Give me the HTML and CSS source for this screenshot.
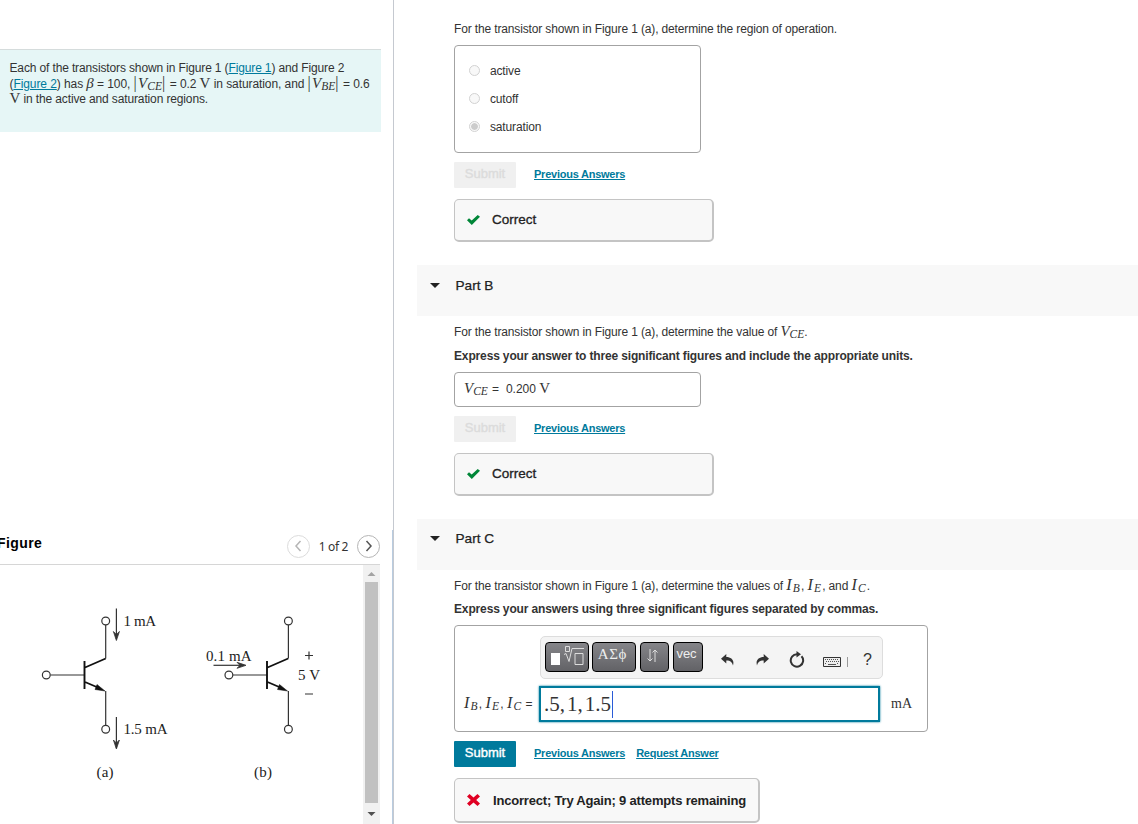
FILE: index.html
```
<!DOCTYPE html>
<html lang="en">
<head>
    <meta charset="UTF-8">
    <meta name="viewport" content="width=device-width, initial-scale=1.0">
    <title>Transistor Regions</title>
    <link rel="stylesheet" href="styles.css">
</head>
<body>
    <div class="page">
        <aside class="sidebar">
            <div class="intro">
                <div class="line intro-1">Each of the transistors shown in Figure 1 (<a href="#">Figure 1</a>) and Figure 2</div>
                <div class="line intro-2">(<a href="#">Figure 2</a>) has <i class="math">β</i> = 100, <span class="bar">|</span><i class="math">V<sub>CE</sub></i><span class="bar">|</span> = 0.2 <span class="math">V</span> in saturation, and <span class="bar">|</span><i class="math">V<sub>BE</sub></i><span class="bar">|</span> = 0.6</div>
                <div class="line intro-3"><span class="math">V</span> in the active and saturation regions.</div>
            </div>

            <div class="figure-panel">
                <div class="figure-header">
                    <h3>Figure</h3>
                    <div class="pager">
                        <button class="page-btn prev" disabled><svg width="8" height="12" viewBox="0 0 8 12"><path d="M6.500 1 2 6l4.500 5"/></svg></button>
                        <span>1 of 2</span>
                        <button class="page-btn next"><svg width="8" height="12" viewBox="0 0 8 12"><path d="M1.500 1 6 6l-4.500 5"/></svg></button>
                    </div>
                </div>
                <div class="figure-body">
                    <svg class="circuit" width="363" height="259" viewBox="0 565 363 259">
                        <!-- transistor (a) -->
                        <g class="wire">
                            <circle cx="46.300" cy="675" r="3.900"/>
                            <path d="M50.500 675H84M105.700 625v33.500M105.700 691v34"/>
                            <circle cx="105.700" cy="621" r="3.900"/>
                            <circle cx="105.700" cy="729.300" r="3.900"/>
                            <path d="M116.400 608.500V639M116.400 717v31"/>
                            <path d="M113.400 631.500l3 9 3-9-3 3zM113.400 740l3 9 3-9-3 3z" fill="#333" stroke-width="0.800"/>
                            <path class="thick" d="M84.500 661v28M85 667.500l20.700-9M85 682l14 6"/>
                            <path class="tip" d="M97 684.500l8 6.500-10-1.500z"/>
                        </g>
                        <!-- transistor (b) -->
                        <g class="wire">
                            <circle cx="228.900" cy="675" r="3.900"/>
                            <path d="M233 675h34M288.400 625v33.500M288.400 691v34"/>
                            <circle cx="288.400" cy="621" r="3.900"/>
                            <circle cx="288.400" cy="729.300" r="3.900"/>
                            <path d="M213.500 665.300H244"/>
                            <path d="M237 662.300l9 3-9 3 3-3z" fill="#333" stroke-width="0.800"/>
                            <path class="thick" d="M267 661v28M267.500 667.500l20.700-9M267.500 682l14 6"/>
                            <path class="tip" d="M279.500 684.500l8 6.500-10-1.500z"/>
                            <path d="M305 655.500h8M309 651.500v8M305 694h8"/>
                        </g>
                        <text x="123.500" y="625.500" textLength="32.500">1 mA</text>
                        <text x="123.500" y="734" textLength="44">1.5 mA</text>
                        <text x="206" y="661" textLength="45.500">0.1 mA</text>
                        <text x="298" y="680" textLength="22">5 V</text>
                        <text x="96.500" y="777" textLength="17">(a)</text>
                        <text x="254" y="777" textLength="18">(b)</text>
                    </svg>
                    <div class="scrollbar">
                        <svg width="17" height="17" viewBox="0 0 17 17"><path d="M4.500 11 8.500 7l4 4z" fill="#a3a3a3"/></svg>
                        <div class="thumb"></div>
                        <svg width="17" height="21" viewBox="0 0 17 21"><path d="M4.500 9h8l-4 4z" fill="#505050"/></svg>
                    </div>
                </div>
            </div>
        </aside>

        <main class="content">
            <section class="part part-a">
                <p class="question">For the transistor shown in Figure 1 (a), determine the region of operation.</p>
                <div class="box choices">
                    <label><span class="radio"></span><span>active</span></label>
                    <label><span class="radio"></span><span>cutoff</span></label>
                    <label><span class="radio checked"></span><span>saturation</span></label>
                </div>
                <div class="actions">
                    <button class="submit" disabled>Submit</button>
                    <a href="#">Previous Answers</a>
                </div>
                <div class="feedback">
                    <svg class="check" width="13" height="10" viewBox="0 0 13 10"><path d="M0 5.200 2 3.300l2.700 2.300L10.700 0 13 1.800 4.800 10z"/></svg>
                    Correct
                </div>
            </section>

            <header class="part-header">
                <span class="arrow"></span>
                <h2>Part B</h2>
            </header>
            <section class="part">
                <p class="question">For the transistor shown in Figure 1 (a), determine the value of <i class="math">V<sub>CE</sub></i>.</p>
                <p class="instruction">Express your answer to three significant figures and include the appropriate units.</p>
                <div class="box result">
                    <i class="math">V<sub>CE</sub></i><span class="equals">=</span><span>0.200 <span class="math">V</span></span>
                </div>
                <div class="actions">
                    <button class="submit" disabled>Submit</button>
                    <a href="#">Previous Answers</a>
                </div>
                <div class="feedback">
                    <svg class="check" width="13" height="10" viewBox="0 0 13 10"><path d="M0 5.200 2 3.300l2.700 2.300L10.700 0 13 1.800 4.800 10z"/></svg>
                    Correct
                </div>
            </section>

            <header class="part-header part-c-header">
                <span class="arrow"></span>
                <h2>Part C</h2>
            </header>
            <section class="part">
                <p class="question">For the transistor shown in Figure 1 (a), determine the values of <i class="math current">I<sub>B</sub></i>, <i class="math current">I<sub>E</sub></i>, and <i class="math current">I<sub>C</sub></i>.</p>
                <p class="instruction part-c-text">Express your answers using three significant figures separated by commas.</p>
                <div class="box editor">
                    <div class="toolbar">
                        <button class="tool root">
                            <svg width="34" height="20" viewBox="0 0 34 20"><path d="M1 8h9v12H1z" fill="#fff"/><path d="M14 9.500l2-1 3 8L22 3.500H34M15.500 1.500h4v5h-4zM25 8.500h8v11h-8z" fill="none" stroke="#ddd"/></svg>
                        </button>
                        <button class="tool greek">ΑΣϕ</button>
                        <button class="tool arrows"><svg width="11" height="13" viewBox="0 0 11 13"><path d="M3 0v12M.5 9.500 3 12l2.500-2.500M8 13V1M5.500 3.500 8 1l2.500 2.500" fill="none" stroke="#ddd"/></svg></button>
                        <button class="tool vec">vec</button>
                        <div class="icons">
                            <svg width="13" height="12" viewBox="0 0 13 12"><path d="M0 4.800 5.300 0v2.900c5 .1 8.300 3 6.700 8.600-1-3.500-2.700-5.100-6.700-5v3z"/></svg>
                            <svg width="13" height="12" viewBox="0 0 13 12"><path d="M13 4.800 7.700 0v2.900c-5 .1-8.300 3-6.700 8.600 1-3.500 2.700-5.100 6.700-5v3z"/></svg>
                            <svg class="reset" width="16" height="17" viewBox="0 0 16 17"><path d="M8 3.300a6.200 6.200 0 1 0 4.500 2" fill="none" stroke="#333" stroke-width="2"/><path d="M7.500 0v6.500L12 3.300z"/></svg>
                            <svg class="keyboard" width="18" height="10" viewBox="0 0 18 10"><path d="M.5.500h17v9H.5z" fill="#eee" stroke="#333"/><path d="M2 2.500h14M3 4.500h13M2 6.500h2M14 6.500h2" stroke="#555" stroke-dasharray="1 1"/><path d="M5 7.500h8" stroke="#555"/></svg>
                            <span class="divider"></span>
                            <span class="help">?</span>
                        </div>
                    </div>
                    <div class="answer-row">
                        <span class="answer-label"><i class="math current">I<sub>B</sub></i>, <i class="math current">I<sub>E</sub></i>, <i class="math current">I<sub>C</sub></i> =</span>
                        <div class="answer-input"><span>.5,</span><span>1,</span><span>1.5</span><i class="caret"></i></div>
                        <span class="unit">mA</span>
                    </div>
                </div>
                <div class="actions">
                    <button class="submit">Submit</button>
                    <a href="#">Previous Answers</a>
                    <a href="#" class="request">Request Answer</a>
                </div>
                <div class="feedback wrong">
                    <svg class="cross" width="13" height="12" viewBox="0 0 13 12"><path d="M0 2.500 2.500 0l4 3.500 4-3.500L13 2.500 9.200 6l3.800 3.500-2.500 2.500-4-3.500-4 3.500L0 9.500 3.800 6z"/></svg>
                    Incorrect; Try Again; 9 attempts remaining
                </div>
            </section>
        </main>
    </div>
</body>
</html>
```
FILE: styles.css
```
* {
    box-sizing: border-box;
}

body {
    margin: 0;
    font-family: "Liberation Sans", Arial, sans-serif;
    font-size: 12px;
    color: #333;
    background-color: #fff;
    overflow: hidden;
}

h2, h3, p {
    margin: 0;
}

a {
    color: #007a9c;
    text-underline-offset: 1px;
}

button {
    font-family: inherit;
    border: none;
    padding: 0;
}

.page {
    display: flex;
    height: 824px;
}

/* Math symbols */
.math {
    font-family: "Liberation Serif", "Times New Roman", serif;
    font-size: 15px;
    line-height: 0;
    letter-spacing: 0;
}

.math sub {
    font-size: 11.5px;
    line-height: 0;
    vertical-align: -2px;
}

.current {
    font-size: 16px;
    letter-spacing: 1.2px;
}

.bar {
    margin-right: 1.3px;
    font-family: "Liberation Serif", serif;
    font-size: 16px;
    line-height: 0;
    letter-spacing: 0;
}

/* Left column */
.sidebar {
    width: 394px;
    flex: none;
    display: flex;
    flex-direction: column;
    justify-content: space-between;
    border-right: 1px solid #c5c9d0;
}

.intro {
    width: 381px;
    height: 83px;
    margin-top: 49px;
    padding: 10px 0 0 9.500px;
    letter-spacing: -0.135px;
    background-color: #e6f6f6;
    border-top: 1px solid #d5dcdc;
    white-space: nowrap;
}

.line {
    height: 16px;
    line-height: 16px;
}

.intro-2 {
    letter-spacing: -0.08px;
}

.intro-3 {
    height: 15px;
    line-height: 15px;
}

.figure-panel {
    height: 294px;
    border-right: 1px solid #b9cce0;
}

.figure-header {
    width: 380px;
    height: 35px;
    display: flex;
    justify-content: space-between;
    border-bottom: 1px solid #d6d6d6;
}

.figure-header h3 {
    margin: 5px 0 0 -3px;
    font-size: 14px;
    line-height: 17px;
    letter-spacing: 0.4px;
    color: #000;
}

.pager {
    display: flex;
    align-items: center;
    gap: 9px;
    height: 32px;
    font-family: "Noto Sans", sans-serif;
    font-size: 12px;
    letter-spacing: -0.35px;
    color: #333;
}

.page-btn {
    width: 23px;
    height: 23px;
    display: flex;
    align-items: center;
    justify-content: center;
    border: 1px solid #b5b5b5;
    border-radius: 50%;
    background-color: #fff;
}

.page-btn path {
    fill: none;
    stroke: #555;
    stroke-width: 1.5;
}

.page-btn.prev {
    border-color: #dcdcdc;
}

.page-btn.prev path {
    stroke: #b5b5b5;
}

.figure-body {
    display: flex;
    height: 259px;
}

.circuit text {
    font-family: "Liberation Serif", serif;
    font-size: 15px;
    fill: #222;
}

.wire {
    fill: none;
    stroke: #333;
    stroke-width: 1.2;
}

.wire .thick {
    stroke: #111;
    stroke-width: 1.9;
}

.wire .tip {
    fill: #111;
    stroke: #111;
    stroke-width: 0.5;
}

.scrollbar {
    width: 17px;
    display: flex;
    flex-direction: column;
    align-items: center;
    background-color: #f1f1f1;
}

.thumb {
    width: 13px;
    flex: 1;
    background-color: #c1c1c1;
}

/* Right column */
.content {
    flex: 1;
    padding-left: 23px;
}

.part {
    height: 203px;
    padding: 6px 0 0 37px;
}

.part-a {
    height: 265px;
    padding-top: 19px;
}

.question {
    height: 20px;
    line-height: 20px;
    letter-spacing: -0.14px;
    white-space: nowrap;
}

.instruction {
    height: 20px;
    margin-top: 3px;
    line-height: 22px;
    font-weight: bold;
    letter-spacing: -0.145px;
    white-space: nowrap;
}

.box {
    width: 247px;
    border: 1px solid #a3a3a3;
    border-radius: 4px;
}

.choices {
    height: 108px;
    margin-top: 6px;
    padding: 10px 0 0 14px;
    letter-spacing: -0.15px;
}

.choices label {
    display: flex;
    align-items: center;
    gap: 10px;
    height: 28.4px;
}

.choices label span:last-child {
    padding-top: 1px;
}

.radio {
    width: 11px;
    height: 11px;
    padding: 1px;
    border: 1px solid #d2d2d2;
    border-radius: 50%;
    background-color: #f8f8f8;
}

.radio.checked {
    background-color: #ccc;
    background-clip: content-box;
    box-shadow: inset 0 0 0 1px #f8f8f8;
}

.actions {
    display: flex;
    margin-top: 9px;
    height: 26px;
}

.actions a {
    margin: 5px 11px 0 0;
    font-size: 11px;
    line-height: 14px;
    font-weight: bold;
    letter-spacing: -0.24px;
}

.submit {
    width: 62px;
    height: 26px;
    margin-right: 18px;
    padding-bottom: 3px;
    font-size: 13px;
    color: #fff;
    background-color: #007a9c;
    -webkit-text-stroke: 0.4px;
    border-radius: 1px;
}

.submit:disabled {
    color: #dcdcdc;
    background-color: #f0f0f0;
}

.feedback {
    width: 260px;
    height: 43px;
    margin-top: 11px;
    padding: 0 0 1px 12px;
    display: flex;
    align-items: center;
    gap: 12px;
    font-size: 13.5px;
    -webkit-text-stroke: 0.3px;
    color: #222;
    background-color: #f8f8f8;
    border: 1px solid #c4c4c4;
    border-right-width: 2px;
    border-bottom-width: 2px;
    border-radius: 5px;
}

.check {
    fill: #008638;
}

.cross {
    fill: #e00023;
}

.part-header {
    height: 51px;
    padding: 0 0 11px 12.5px;
    display: flex;
    align-items: center;
    background-color: #f8f8f8;
}

.part-c-header {
    padding-bottom: 13px;
}

.part-header h2 {
    font-size: 13.6px;
    font-weight: normal;
    -webkit-text-stroke: 0.25px;
    margin-left: 16px;
    color: #222;
}

.arrow {
    border: 5px solid transparent;
    border-top-color: #222;
    border-bottom: none;
}

.result {
    height: 35px;
    margin-top: 7px;
    padding-left: 9px;
    display: flex;
    align-items: baseline;
    line-height: 32px;
}

.equals {
    margin: 0 7px 0 4px;
}

/* Math editor */
.part-c-text {
    margin-top: 2px;
}

.editor {
    width: 474px;
    height: 107px;
    margin-top: 7px;
    padding-top: 10px;
}

.toolbar {
    width: 343px;
    height: 43px;
    margin-left: 85px;
    padding: 5px 0 0 4px;
    display: flex;
    gap: 3px;
    background-color: #f4f4f4;
    border: 1px solid #ddd;
    border-radius: 5px;
}

.tool {
    width: 44px;
    height: 30px;
    display: flex;
    justify-content: center;
    color: #eee;
    background: linear-gradient(#858589, #626266);
    border: 1px solid #000;
    border-radius: 4px;
}

.root {
    padding-top: 2px;
}

.greek {
    padding: 3px 3px 0 0;
    font-family: "Liberation Serif", serif;
    font-size: 15px;
    letter-spacing: 0.6px;
}

.arrows {
    width: 29px;
    padding: 6px 4px 0 0;
    margin-left: 1px;
}

.vec {
    width: 30px;
    padding: 3px 3px 0 0;
    font-size: 13px;
    margin-left: 1px;
}

.icons {
    display: flex;
    align-items: center;
    height: 35px;
    margin-left: 15px;
    fill: #333;
}

.icons svg + svg {
    margin-left: 22px;
}

.icons svg + .reset {
    margin-left: 20px;
}

.icons .reset + .keyboard {
    margin: 4px 0 0 18px;
}

.divider {
    width: 1px;
    height: 10px;
    margin: 4px 15px 0 6px;
    background-color: #999;
}

.help {
    font-size: 16px;
}

.answer-row {
    display: flex;
    margin-top: 7px;
}

.answer-label {
    width: 75px;
    margin-left: 9px;
    line-height: 36px;
    white-space: nowrap;
}

.answer-input {
    width: 341px;
    height: 36px;
    display: flex;
    align-items: center;
    gap: 2px;
    padding-left: 3px;
    font-family: "Liberation Serif", serif;
    font-size: 21px;
    border: 2px solid #007a9c;
    box-shadow: 0 0 2px #007a9c;
}

.caret {
    width: 1px;
    height: 27px;
    margin-left: -1px;
    background-color: #2a5bd7;
}

.unit {
    margin-left: 11px;
    font-family: "Liberation Serif", serif;
    font-size: 14px;
    line-height: 35px;
}

.wrong {
    width: 306px;
    height: 45px;
    gap: 13px;
    padding-bottom: 0;
    font-size: 13px;
    font-weight: bold;
    letter-spacing: -0.19px;
    -webkit-text-stroke: 0;
}
```
